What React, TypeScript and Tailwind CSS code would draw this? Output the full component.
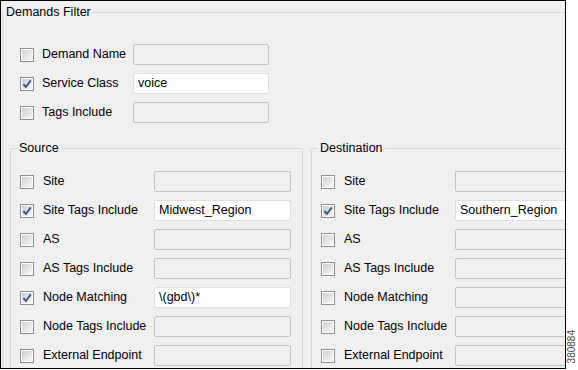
import React from 'react';

type Row = { label: string; value?: string; checked?: boolean };

const filterRows: Row[] = [
  { label: 'Demand Name' },
  { label: 'Service Class', value: 'voice', checked: true },
  { label: 'Tags Include' },
];

const sourceRows: Row[] = [
  { label: 'Site' },
  { label: 'Site Tags Include', value: 'Midwest_Region', checked: true },
  { label: 'AS' },
  { label: 'AS Tags Include' },
  { label: 'Node Matching', value: '\\(gbd\\)*', checked: true },
  { label: 'Node Tags Include' },
  { label: 'External Endpoint' },
];

const destinationRows: Row[] = [
  { label: 'Site' },
  { label: 'Site Tags Include', value: 'Southern_Region', checked: true },
  { label: 'AS' },
  { label: 'AS Tags Include' },
  { label: 'Node Matching' },
  { label: 'Node Tags Include' },
  { label: 'External Endpoint' },
];

function CheckBox({ checked }: { checked?: boolean }) {
  return (
    <div className="w-[14px] h-[14px] shrink-0 border border-[#8e8f8f] bg-white p-[1px]">
      <div className="relative w-full h-full bg-gradient-to-br from-[#cdd0d4] to-[#f7f7f7]">
        {checked && (
          <svg viewBox="0 0 10 10" className="absolute inset-0 w-full h-full">
            <path d="M1.4 5 L3.9 8 L8.8 1.4" fill="none" stroke="#42598a" strokeWidth="2" />
          </svg>
        )}
      </div>
    </div>
  );
}

function FieldRow({ row, labelWidth, gap, inputWidth }: { row: Row; labelWidth: string; gap: string; inputWidth: string }) {
  return (
    <div className="flex items-center h-[29px] shrink-0">
      <CheckBox checked={row.checked} />
      <span className={`${gap} ${labelWidth} shrink-0 whitespace-nowrap text-black`}>{row.label}</span>
      <div
        className={`${inputWidth} h-[21px] shrink-0 rounded-[2px] border flex items-center pl-[4px] whitespace-nowrap ${
          row.checked ? 'bg-white border-[#dcdfe3]' : 'bg-[#f0f0f0] border-[#c2c4c7]'
        }`}
      >
        {row.value}
      </div>
    </div>
  );
}

function GroupBox({ title, rows, className }: { title: string; rows: Row[]; className: string }) {
  return (
    <fieldset className={`border border-[#d5dadf] rounded-[3px] shrink-0 ${className}`}>
      <legend className="ml-[6px] px-[2px] leading-[15px]">{title}</legend>
      <div className="flex flex-col pt-[11px] pl-[9px]">
        {rows.map((row) => (
          <FieldRow key={row.label} row={row} gap="ml-[9px]" labelWidth="w-[111px]" inputWidth="w-[137px]" />
        ))}
      </div>
    </fieldset>
  );
}

export default function App() {
  return (
    <div
      className="w-[578px] h-[370px] bg-white flex text-[12.5px] text-black"
      style={{ fontFamily: '"Liberation Sans", Arial, sans-serif' }}
    >
      {/* Dialog crop */}
      <div className="w-[566px] h-[369px] shrink-0 border border-black bg-[#f0f0f0] overflow-hidden">
        <fieldset className="mt-[4px] ml-[1px] w-[640px] h-[420px] border border-[#d5dadf] rounded-[3px]">
          <legend className="ml-[2px] pl-[1px] pr-[1px] leading-[14px]">Demands Filter</legend>

          {/* Demand filters */}
          <div className="flex flex-col pt-[21px] pl-[17px]">
            {filterRows.map((row) => (
              <FieldRow key={row.label} row={row} gap="ml-[8px]" labelWidth="w-[91px]" inputWidth="w-[136px]" />
            ))}
          </div>

          {/* Source / Destination */}
          <div className="flex gap-[8px] mt-[14px] pl-[7px]">
            <GroupBox title="Source" rows={sourceRows} className="w-[293px] h-[260px]" />
            <GroupBox title="Destination" rows={destinationRows} className="w-[293px] h-[260px]" />
          </div>
        </fieldset>
      </div>

      {/* Figure number */}
      <div className="flex-1 flex flex-col justify-end items-center pb-[7px]">
        <span className="[writing-mode:vertical-rl] rotate-180 text-[10px] text-[#444] leading-none">
          380884
        </span>
      </div>
    </div>
  );
}
